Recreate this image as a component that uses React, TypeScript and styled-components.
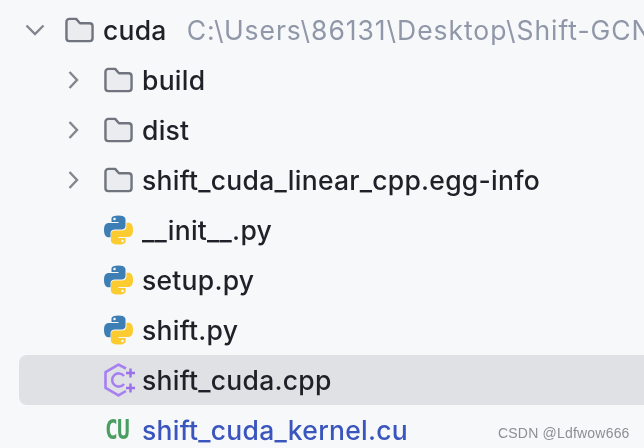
import React from 'react';
import styled, { createGlobalStyle } from 'styled-components';

const GlobalStyle = createGlobalStyle`
  html, body {
    margin: 0;
    height: 100%;
    background: #f7f8fa;
    overflow: hidden;
  }
`;

type Kind = 'folder' | 'python' | 'cpp' | 'cu';

interface Node {
  name: string;
  kind: Kind;
  arrow?: 'open' | 'closed';
  path?: string;
  selected?: boolean;
  root?: boolean;
  vcs?: boolean;
}

const nodes: Node[] = [
  { name: 'cuda', kind: 'folder', arrow: 'open', root: true, path: 'C:\\Users\\86131\\Desktop\\Shift-GCN' },
  { name: 'build', kind: 'folder', arrow: 'closed' },
  { name: 'dist', kind: 'folder', arrow: 'closed' },
  { name: 'shift_cuda_linear_cpp.egg-info', kind: 'folder', arrow: 'closed' },
  { name: '__init__.py', kind: 'python' },
  { name: 'setup.py', kind: 'python' },
  { name: 'shift.py', kind: 'python' },
  { name: 'shift_cuda.cpp', kind: 'cpp', selected: true },
  { name: 'shift_cuda_kernel.cu', kind: 'cu', vcs: true },
];

function FolderIcon() {
  return (
    <svg width="30" height="26" viewBox="0 0 30 26" fill="#ebecf0" stroke="#70747f" strokeWidth="2.5" strokeLinejoin="round">
      <path d="M4.5 1.5h7l4 4.5h10a3 3 0 0 1 3 3V21.5a3 3 0 0 1-3 3h-21a3 3 0 0 1-3-3v-17a3 3 0 0 1 3-3z" />
    </svg>
  );
}

function PythonIcon() {
  return (
    <svg width="30" height="30" viewBox="0 0 24 24">
      <path
        fill="#3d7fb5"
        d="M11.914 0C5.82 0 6.2 2.656 6.2 2.656l.007 2.752h5.814v.826H3.9S0 5.789 0 11.969c0 6.18 3.403 5.96 3.403 5.96h2.03v-2.867s-.109-3.42 3.35-3.42h5.766s3.24.052 3.24-3.148V3.202S18.28 0 11.913 0zM8.708 1.85c.578 0 1.046.47 1.046 1.052 0 .581-.468 1.051-1.046 1.051-.579 0-1.046-.47-1.046-1.051 0-.582.467-1.052 1.046-1.052z"
      />
      <path
        fill="#fbcb30"
        d="M12.087 24c6.092 0 5.712-2.656 5.712-2.656l-.007-2.752h-5.814v-.826h8.123s3.9.445 3.9-5.735c0-6.18-3.404-5.96-3.404-5.96h-2.03v2.867s.109 3.42-3.35 3.42H8.95s-3.24-.052-3.24 3.148v5.292S5.72 24 12.087 24zm3.206-1.85c-.578 0-1.046-.47-1.046-1.052 0-.581.468-1.051 1.046-1.051.579 0 1.046.47 1.046 1.051 0 .582-.467 1.052-1.046 1.052z"
      />
    </svg>
  );
}

function CppIcon() {
  return (
    <svg width="32" height="34" viewBox="0 0 32 34" fill="none" stroke="#a67ff0" strokeWidth="2.6" style={{ overflow: 'visible' }}>
      <path d="M22 5.5 14.5 1.6 1.5 9.2v15.6l13 7.6 7.5-4.4" strokeLinejoin="round" />
      <path d="M20 13a6.6 6.6 0 1 0 0 8" />
      <path d="M26.5 5.5v9M22 10h9M26.5 20.5v9M22 25h9" strokeWidth="2.4" stroke="#9a70ea" />
    </svg>
  );
}

function ArrowIcon({ open }: { open: boolean }) {
  return (
    <svg width="22" height="22" viewBox="0 0 22 22" fill="none" stroke="#83868e" strokeWidth="2.4">
      <path d={open ? 'M2.5 6.5l8.5 8.5 8.5-8.5' : 'M6.5 3l7.5 8-7.5 8'} />
    </svg>
  );
}

function FileIcon({ kind }: { kind: Kind }) {
  if (kind === 'folder') return <FolderIcon />;
  if (kind === 'python') return <PythonIcon />;
  if (kind === 'cpp') return <CppIcon />;
  return <CuBadge>CU</CuBadge>;
}

export default function App() {
  return (
    <>
      <GlobalStyle />
      <Tree>
        {nodes.map((node) => (
          <Row key={node.name} $selected={node.selected} $root={node.root}>
            <ArrowSlot>{node.arrow && <ArrowIcon open={node.arrow === 'open'} />}</ArrowSlot>
            <IconSlot>
              <FileIcon kind={node.kind} />
            </IconSlot>
            <Label $vcs={node.vcs}>{node.name}</Label>
            {node.path && <PathHint>{node.path}</PathHint>}
          </Row>
        ))}
      </Tree>
      <Watermark>CSDN @Ldfwow666</Watermark>
    </>
  );
}

const Tree = styled.div`
  width: 644px;
  height: 448px;
  box-sizing: border-box;
  padding: 5px 0 0 19px;
  background: #f7f8fa;
  overflow: hidden;
  filter: blur(0.7px);
  font-family: Inter, 'Liberation Sans', sans-serif;
`;

const Row = styled.div<{ $selected?: boolean; $root?: boolean }>`
  display: flex;
  align-items: center;
  height: 50px;
  width: 640px;
  padding-left: ${(p) => (p.$root ? '1px' : '40px')};
  border-radius: 8px;
  white-space: nowrap;
  background: ${(p) => (p.$selected ? '#dfe1e5' : 'transparent')};
`;

const ArrowSlot = styled.span`
  display: flex;
  flex: none;
  align-items: center;
  justify-content: center;
  width: 30px;
  margin-right: 15px;
`;

const IconSlot = styled.span`
  display: flex;
  flex: none;
  align-items: center;
  justify-content: flex-start;
  width: 29px;
  margin-right: 9px;
`;

const Label = styled.span<{ $vcs?: boolean }>`
  font-size: 26.5px;
  font-weight: 500;
  letter-spacing: 0.25px;
  color: ${(p) => (p.$vcs ? '#3a55bd' : '#1f2128')};
`;

const PathHint = styled.span`
  margin-left: 20px;
  font-size: 26.5px;
  letter-spacing: 0.95px;
  color: #8f97a8;
`;

const CuBadge = styled.span`
  display: inline-block;
  margin-left: 1px;
  font-family: 'DejaVu Sans Mono', monospace;
  font-size: 26px;
  font-weight: 700;
  letter-spacing: -1px;
  color: #4a9e62;
  transform: scaleX(0.82);
  transform-origin: left center;
`;

const Watermark = styled.div`
  position: absolute;
  left: 498px;
  top: 425px;
  font-family: 'Liberation Sans', sans-serif;
  font-size: 14px;
  color: #8d8f93;
  letter-spacing: 0.2px;
  filter: blur(0.3px);
`;
